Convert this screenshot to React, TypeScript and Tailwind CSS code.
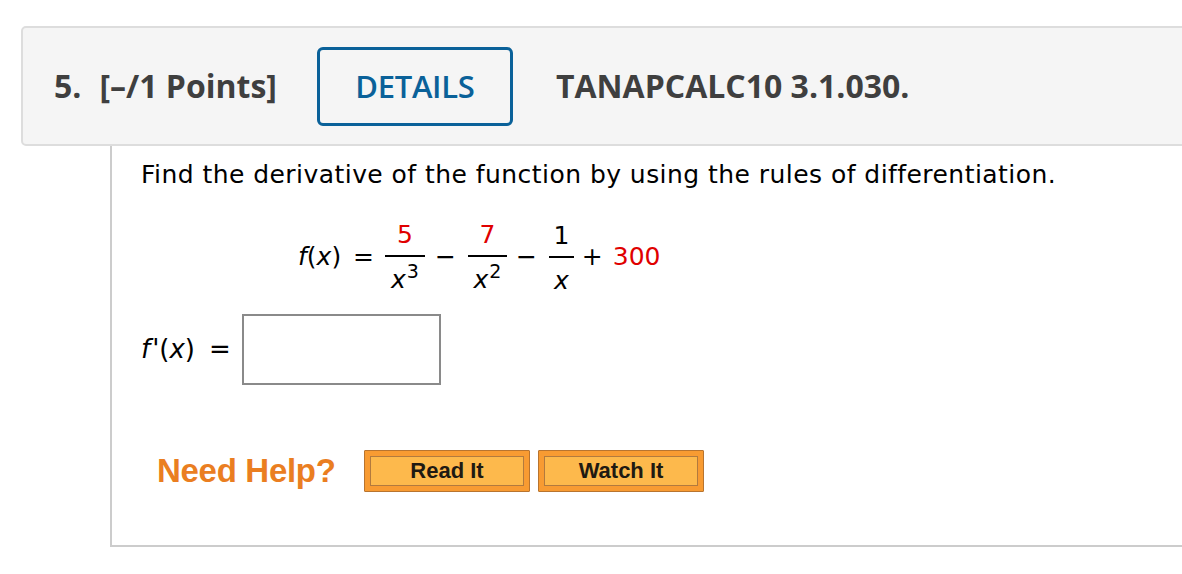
import React from 'react';

const verdana = { fontFamily: '"DejaVu Sans", Verdana, sans-serif' };

function Frac({ num, den, red, w }: { num: React.ReactNode; den: React.ReactNode; red?: boolean; w: string }) {
  return (
    <span className={`inline-flex flex-col items-center ${w}`}>
      <span className={`pt-[3px] pb-[7px] leading-[26px] ${red ? 'text-[#e00000]' : 'text-black'}`}>{num}</span>
      <span className="w-full h-[2px] bg-black" />
      <span className="pt-[10px] leading-[26px] whitespace-nowrap">{den}</span>
    </span>
  );
}

function Pow({ exp }: { exp: string }) {
  return (
    <>
      <span className="italic">x</span>
      <span className="relative -top-[10px] ml-[1px] text-[19px]">{exp}</span>
    </>
  );
}

function HelpButton({ label }: { label: string }) {
  return (
    <button className="w-[166px] h-[42px] border border-[#b8742f] bg-[#f89b32] p-[5px] rounded-[1px]">
      <span
        className="flex h-full w-full items-center justify-center border border-[#b27a3e] bg-[#fdb94c] text-[22px] font-bold text-[#1f1a12]"
        style={{ fontFamily: '"Liberation Sans", Arial, sans-serif' }}
      >
        {label}
      </span>
    </button>
  );
}

export default function App() {
  return (
    <div className="w-[1182px] h-[574px] overflow-hidden bg-white pl-[21px] pt-[26px]">
      {/* Header */}
      <div
        className="w-[1200px] h-[120px] flex items-center border-2 border-[#dddddd] rounded-l-[5px] bg-[#f5f5f5] pl-[31px]"
        style={{ fontFamily: '"Open Sans", sans-serif' }}
      >
        <span className="text-[32px] font-bold text-[#3f3f3f]">5.</span>
        <span className="ml-[18px] text-[32px] font-bold text-[#3f3f3f]">[–/1 Points]</span>
        <div className="ml-[40px] w-[196px] h-[79px] flex items-center justify-center border-[3px] border-[#0a6199] rounded-[6px]">
          <span className="text-[31px] font-semibold text-[#0a6199] tracking-[-0.3px]">DETAILS</span>
        </div>
        <span className="ml-[43px] text-[32px] font-bold text-[#3f3f3f]">TANAPCALC10 3.1.030.</span>
      </div>

      {/* Question body */}
      <div className="ml-[89px] w-[1100px] h-[401px] border-l-2 border-b-2 border-[#cccccc] pl-[29px] pt-[12px]" style={verdana}>
        <p className="text-[25px] leading-[34px] tracking-[0.45px] text-black">
          Find the derivative of the function by using the rules of differentiation.
        </p>

        {/* f(x) = 5/x^3 - 7/x^2 - 1/x + 300 */}
        <div className="mt-[27px] ml-[157px] flex items-center text-[25px] leading-[26px] text-black">
          <span className="w-[45px] whitespace-nowrap">
            <span className="italic">f</span>(<span className="italic">x</span>)
          </span>
          <span className="ml-[10px]">=</span>
          <span className="ml-[11px]">
            <Frac red w="w-[40px]" num="5" den={<Pow exp="3" />} />
          </span>
          <span className="ml-[10px]">−</span>
          <span className="ml-[12px]">
            <Frac red w="w-[39px]" num="7" den={<Pow exp="2" />} />
          </span>
          <span className="ml-[9px]">−</span>
          <span className="ml-[12px]">
            <Frac w="w-[25px]" num="1" den={<span className="italic">x</span>} />
          </span>
          <span className="ml-[8px]">+</span>
          <span className="ml-[10px] text-[#e00000]">300</span>
        </div>

        {/* answer */}
        <div className="mt-[20px] flex items-center text-[26px] text-black">
          <span className="w-[58px] whitespace-nowrap">
            <span className="italic">f</span>
            <span className="ml-[2px]">'(</span>
            <span className="italic">x</span>)
          </span>
          <span className="ml-[10px]">=</span>
          <input type="text" className="ml-[11px] w-[199px] h-[71px] border-2 border-[#8a8a8a] bg-white outline-none" />
        </div>

        <div className="mt-[61px] ml-[16px] flex items-center">
          <span
            className="w-[181px] text-[33px] font-bold text-[#ea7e21] tracking-[-0.3px]"
            style={{ fontFamily: '"Liberation Sans", Arial, sans-serif' }}
          >
            Need Help?
          </span>
          <div className="ml-[26px] flex gap-[8px]">
            <HelpButton label="Read It" />
            <HelpButton label="Watch It" />
          </div>
        </div>
      </div>
    </div>
  );
}
